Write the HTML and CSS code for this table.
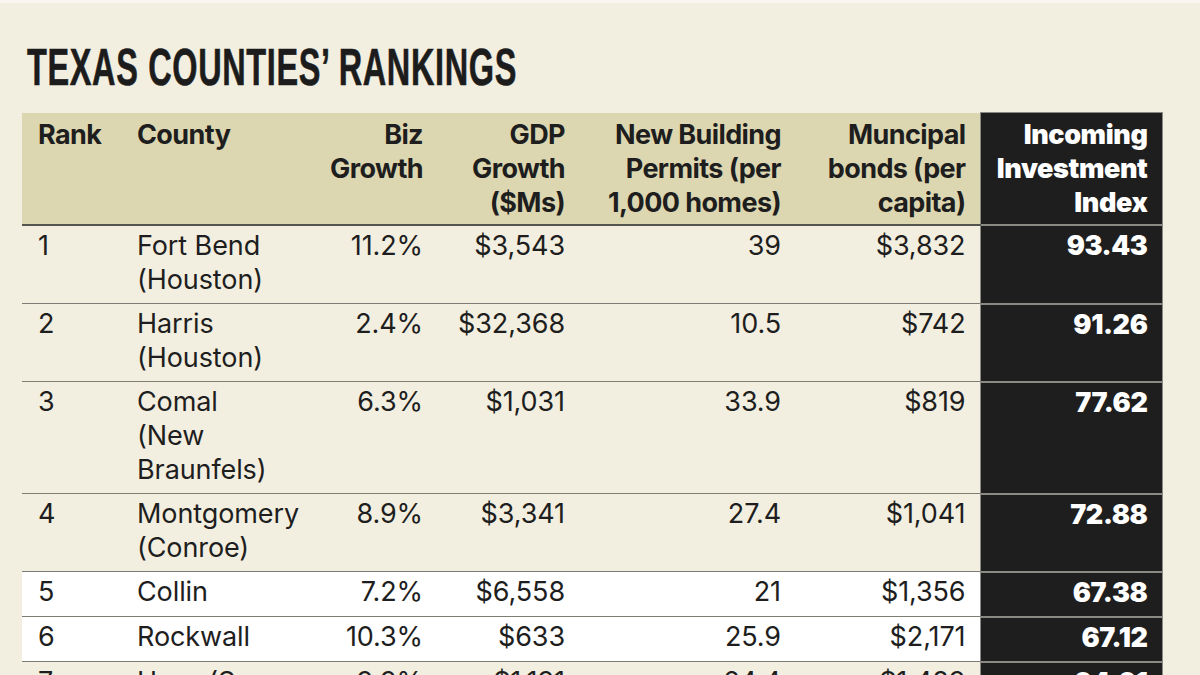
FILE: index.html
```html
<!DOCTYPE html>
<html lang="en">
<head>
<meta charset="utf-8">
<title>Texas Counties' Rankings</title>
<link rel="stylesheet" href="styles.css">
</head>
<body>
<div class="page">
  <h1 class="title"><span class="title-text">TEXAS COUNTIES’ RANKINGS</span></h1>
  <table class="rank-table">
    <colgroup>
      <col class="c-rank"><col class="c-county"><col class="c-biz"><col class="c-gdp"><col class="c-nb"><col class="c-mun"><col class="c-idx">
    </colgroup>
    <thead>
      <tr>
        <th class="l">Rank</th>
        <th class="l">County</th>
        <th class="r">Biz<br>Growth</th>
        <th class="r">GDP<br>Growth<br>($Ms)</th>
        <th class="r">New Building<br>Permits (per<br>1,000 homes)</th>
        <th class="r">Muncipal<br>bonds (per<br>capita)</th>
        <th class="r idx">Incoming<br>Investment<br>Index</th>
      </tr>
    </thead>
    <tbody>
      <tr>
        <td class="l">1</td><td class="l">Fort Bend<br>(Houston)</td><td class="r">11.2%</td><td class="r">$3,543</td><td class="r">39</td><td class="r">$3,832</td><td class="r idx">93.43</td>
      </tr>
      <tr>
        <td class="l">2</td><td class="l">Harris<br>(Houston)</td><td class="r">2.4%</td><td class="r">$32,368</td><td class="r">10.5</td><td class="r">$742</td><td class="r idx">91.26</td>
      </tr>
      <tr>
        <td class="l">3</td><td class="l">Comal<br>(New<br>Braunfels)</td><td class="r">6.3%</td><td class="r">$1,031</td><td class="r">33.9</td><td class="r">$819</td><td class="r idx">77.62</td>
      </tr>
      <tr>
        <td class="l">4</td><td class="l">Montgomery<br>(Conroe)</td><td class="r">8.9%</td><td class="r">$3,341</td><td class="r">27.4</td><td class="r">$1,041</td><td class="r idx">72.88</td>
      </tr>
      <tr class="hl">
        <td class="l">5</td><td class="l">Collin</td><td class="r">7.2%</td><td class="r">$6,558</td><td class="r">21</td><td class="r">$1,356</td><td class="r idx">67.38</td>
      </tr>
      <tr class="hl">
        <td class="l">6</td><td class="l">Rockwall</td><td class="r">10.3%</td><td class="r">$633</td><td class="r">25.9</td><td class="r">$2,171</td><td class="r idx">67.12</td>
      </tr>
      <tr>
        <td class="l">7</td><td class="l">Hays (San<br>Marcos)</td><td class="r">9.9%</td><td class="r">$1,191</td><td class="r">24.4</td><td class="r">$1,489</td><td class="r idx">64.61</td>
      </tr>
    </tbody>
  </table>
</div>
</body>
</html>
```

FILE: styles.css
```css
html, body {
  margin: 0;
  padding: 0;
}
body {
  background: #f3efe0;
  border-top: 3px solid #f8f6ee;
  overflow: hidden;
  height: 672px;
}
.page {
  padding: 40px 0 0 22px;
}
.title {
  margin: 0 0 19px 0;
  height: 50px;
  font-family: "Liberation Sans", Arial, sans-serif;
  font-weight: 700;
  font-size: 51px;
  line-height: 50px;
  color: #1c1c1c;
  white-space: nowrap;
}
.title-text {
  display: inline-block;
  margin-left: 5px;
  transform: scaleX(0.637);
  transform-origin: left center;
  letter-spacing: 1px;
  -webkit-text-stroke: 0.6px #1c1c1c;
}
.rank-table {
  border-collapse: collapse;
  table-layout: fixed;
  width: 1140px;
  font-family: Inter, "Noto Sans", sans-serif;
  font-size: 27px;
  line-height: 34px;
  color: #1e1e1e;
}
.c-rank { width: 99px; }
.c-county { width: 175px; }
.c-biz { width: 141px; }
.c-gdp { width: 142px; }
.c-nb { width: 216px; }
.c-mun { width: 185px; }
.c-idx { width: 182px; }

.rank-table th {
  background: #ddd7b1;
  font-weight: 700;
  vertical-align: top;
  padding: 5px 14px 4px 8px;
  white-space: nowrap;
  border-bottom: 2px solid #555550;
  letter-spacing: -0.6px;
}
.rank-table td {
  vertical-align: top;
  padding: 3px 14px 6px 8px;
  white-space: nowrap;
  border-top: 1px solid #7d7c75;
  letter-spacing: -0.1px;
}
.rank-table tbody tr:first-child td {
  border-top: none;
}
.rank-table .l {
  text-align: left;
  padding-left: 16px;
}
.rank-table .r {
  text-align: right;
}
.rank-table tr.hl td {
  background: #ffffff;
}
.rank-table .idx,
.rank-table tr.hl td.idx {
  background: #1e1e1e;
  color: #ffffff;
  font-weight: 900;
  border-left: 1px solid #8a8a84;
  border-right: 1px solid #8a8a84;
  letter-spacing: -0.4px;
}
.rank-table th.idx {
  border-top: 1px solid #8a8a84;
  border-bottom: 2px solid #8a8a84;
}
.rank-table td.idx {
  border-top: 2px solid #8a8a84;
}
```
